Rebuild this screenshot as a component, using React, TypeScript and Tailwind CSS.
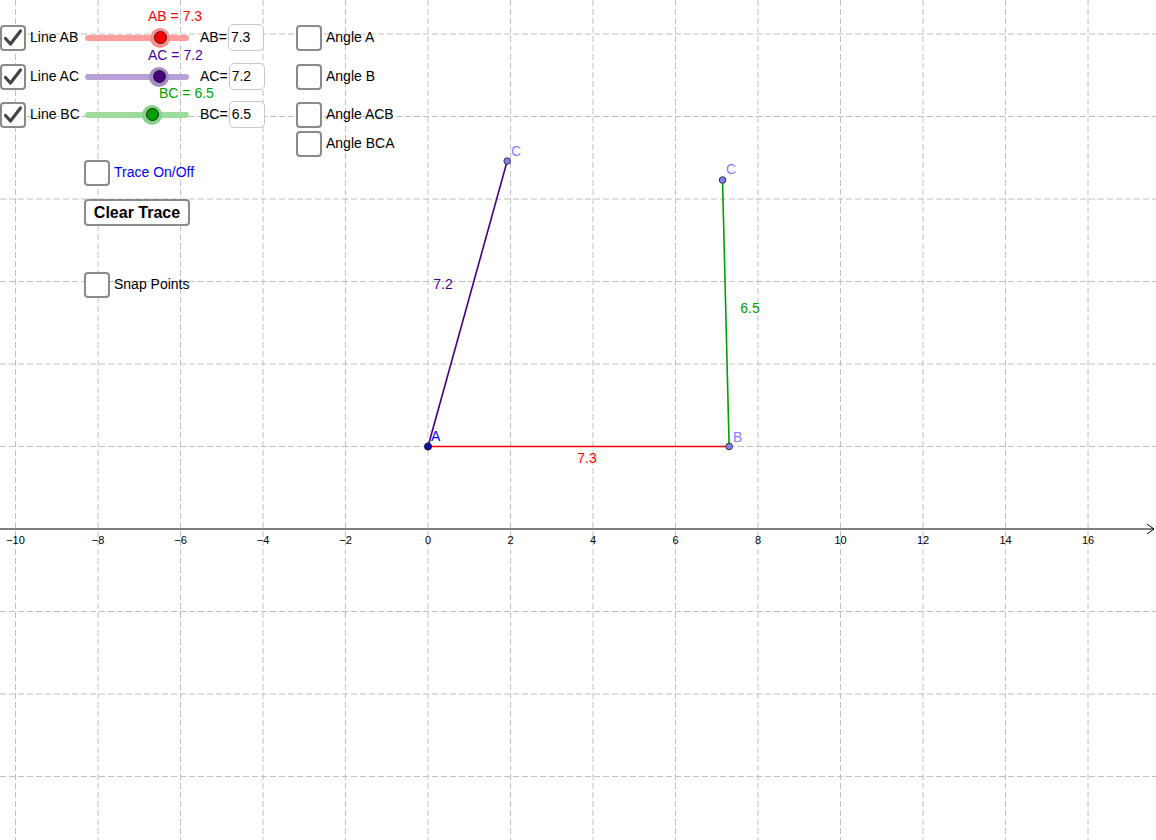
import React from "react";

const UNIT = 41.25;
const OX = 428;
const OY = 529;

const px = (x: number) => OX + x * UNIT;
const py = (y: number) => OY - y * UNIT;

type SliderRow = {
  id: string;
  label: string;
  value: number;
  knobX: number;
  y: number;
  caption: string;
  captionX: number;
  textColor: string;
  trackColor: string;
  knobColor: string;
  haloColor: string;
};

const sliderRows: SliderRow[] = [
  {
    id: "AB",
    label: "Line AB",
    value: 7.3,
    knobX: 75,
    y: 24,
    caption: "AB = 7.3",
    captionX: 148,
    textColor: "text-[#ff0000]",
    trackColor: "bg-[#ff9c9c]",
    knobColor: "bg-[#ff0000]",
    haloColor: "bg-[#ff8c8c]",
  },
  {
    id: "AC",
    label: "Line AC",
    value: 7.2,
    knobX: 74,
    y: 63,
    caption: "AC = 7.2",
    captionX: 148,
    textColor: "text-[#4c0099]",
    trackColor: "bg-[#b8a0d6]",
    knobColor: "bg-[#44007f]",
    haloColor: "bg-[#a58cc8]",
  },
  {
    id: "BC",
    label: "Line BC",
    value: 6.5,
    knobX: 67,
    y: 101,
    caption: "BC = 6.5",
    captionX: 159,
    textColor: "text-[#00a000]",
    trackColor: "bg-[#9ddb9d]",
    knobColor: "bg-[#00a000]",
    haloColor: "bg-[#86d286]",
  },
];

function CheckBox({ checked }: { checked?: boolean }) {
  return (
    <div className="w-[26px] h-[26px] shrink-0 rounded-[4px] border-2 border-[#8a8a8a] bg-white flex items-center justify-center">
      {checked ? (
        <svg width="20" height="20" viewBox="0 0 20 20">
          <path
            d="M2.5 10.5 L7.5 16 L17.5 3"
            fill="none"
            stroke="#444"
            strokeWidth="3.2"
            strokeLinecap="round"
            strokeLinejoin="round"
          />
        </svg>
      ) : null}
    </div>
  );
}

function Slider({ row }: { row: SliderRow }) {
  return (
    <div className="relative w-[104px] h-[26px] shrink-0">
      <div className={`absolute left-0 right-0 top-[10px] h-[6px] rounded-full ${row.trackColor}`} />
      <div
        className={`absolute top-[3px] w-[20px] h-[20px] rounded-full ${row.haloColor} flex items-center justify-center`}
        style={{ left: row.knobX - 10 }}
      >
        <div className={`w-[13px] h-[13px] rounded-full border border-[#222] ${row.knobColor}`} />
      </div>
    </div>
  );
}

function Graph() {
  const vLines: number[] = [];
  for (let k = -5; k <= 9; k++) vLines.push(OX + k * 82.5);
  const hLines: number[] = [];
  for (let k = -6; k <= 4; k++) if (k !== 0) hLines.push(OY + k * 82.5);
  const ticks = [-10, -8, -6, -4, -2, 0, 2, 4, 6, 8, 10, 12, 14, 16];

  const A = { x: px(0), y: py(2) };
  const B = { x: px(7.3), y: py(2) };
  const C1 = { x: px(1.92), y: py(8.92) };
  const C2 = { x: px(7.14), y: py(8.46) };

  return (
    <svg
      className="absolute inset-0"
      width="1156"
      height="840"
      viewBox="0 0 1156 840"
      style={{ fontFamily: '"Liberation Sans", Arial, sans-serif' }}
    >
      {vLines.map((x) => (
        <line key={`v${x}`} x1={x} y1={0} x2={x} y2={840} stroke="#c0c0c0" strokeDasharray="6 3" />
      ))}
      {hLines.map((y) => (
        <line key={`h${y}`} x1={0} y1={y} x2={1156} y2={y} stroke="#c0c0c0" strokeDasharray="6 3" />
      ))}

      <line x1={0} y1={OY} x2={1154} y2={OY} stroke="#000" strokeWidth="1.2" />
      <polyline points="1147,524 1154,529 1147,534" fill="none" stroke="#000" strokeWidth="1" />
      {ticks.map((t) => (
        <text key={t} x={px(t)} y={544} fontSize="11" textAnchor="middle" fill="#000">
          {t < 0 ? `\u2212${-t}` : t}
        </text>
      ))}

      <line x1={A.x} y1={A.y} x2={B.x} y2={B.y} stroke="#ff0000" strokeWidth="1.6" />
      <line x1={A.x} y1={A.y} x2={C1.x} y2={C1.y} stroke="#44007f" strokeWidth="1.6" />
      <line x1={B.x} y1={B.y} x2={C2.x} y2={C2.y} stroke="#00a000" strokeWidth="1.6" />

      <text x={587} y={463} fontSize="14" textAnchor="middle" fill="#ff0000">7.3</text>
      <text x={443} y={289} fontSize="14" textAnchor="middle" fill="#4c0099">7.2</text>
      <text x={750} y={313} fontSize="14" textAnchor="middle" fill="#00a000">6.5</text>

      <circle cx={A.x} cy={A.y} r="3.5" fill="#0a0ac8" stroke="#111" strokeWidth="1" />
      <circle cx={B.x} cy={B.y} r="3.3" fill="#7f7fff" stroke="#333" strokeWidth="1" />
      <circle cx={C1.x} cy={C1.y} r="3.3" fill="#7f7fff" stroke="#333" strokeWidth="1" />
      <circle cx={C2.x} cy={C2.y} r="3.3" fill="#7f7fff" stroke="#333" strokeWidth="1" />

      <text x={431} y={441} fontSize="14" fill="#0000ff">A</text>
      <text x={733} y={442} fontSize="14" fill="#7f7fff">B</text>
      <text x={511} y={156} fontSize="14" fill="#7f7fff">C</text>
      <text x={726} y={174} fontSize="14" fill="#7f7fff">C</text>
    </svg>
  );
}

export default function App() {
  return (
    <div
      className="relative w-[1156px] h-[840px] bg-white overflow-hidden text-[14px] text-black"
      style={{ fontFamily: '"Liberation Sans", Arial, sans-serif' }}
    >
      <Graph />

      {/* length sliders */}
      {sliderRows.map((row) => (
        <React.Fragment key={row.id}>
          <div
            className={`absolute leading-none ${row.textColor}`}
            style={{ left: row.captionX, top: row.y - 15 }}
          >
            {row.caption}
          </div>
          <div className="absolute left-0 flex items-center" style={{ top: row.y }}>
            <CheckBox checked />
            <span className="ml-[4px] w-[55px]">{row.label}</span>
            <Slider row={row} />
            <span className="ml-[11px]">{row.id}=</span>
            <div className="ml-[1px] w-[36px] h-[27px] rounded-[5px] border border-[#c8c8c8] bg-white flex items-center pl-[2px]">
              {row.value}
            </div>
          </div>
        </React.Fragment>
      ))}

      {/* angle toggles */}
      <div className="absolute left-[296px] top-[24px] flex flex-col">
        <div className="flex items-center gap-[4px] h-[27px]">
          <CheckBox />
          <span>Angle A</span>
        </div>
        <div className="flex items-center gap-[4px] h-[27px] mt-[12px]">
          <CheckBox />
          <span>Angle B</span>
        </div>
        <div className="flex items-center gap-[4px] h-[27px] mt-[11px]">
          <CheckBox />
          <span>Angle ACB</span>
        </div>
        <div className="flex items-center gap-[4px] h-[27px] mt-[2px]">
          <CheckBox />
          <span>Angle BCA</span>
        </div>
      </div>

      {/* trace controls */}
      <div className="absolute left-[84px] top-[159px] flex flex-col items-start">
        <div className="flex items-center gap-[4px] h-[27px]">
          <CheckBox />
          <span className="text-[#0000ff]">Trace On/Off</span>
        </div>
        <button
          type="button"
          className="mt-[13px] w-[106px] h-[27px] rounded-[4px] border-2 border-[#8a8a8a] bg-white font-bold text-[16px] leading-none"
        >
          Clear Trace
        </button>
        <div className="flex items-center gap-[4px] h-[27px] mt-[45px]">
          <CheckBox />
          <span>Snap Points</span>
        </div>
      </div>
    </div>
  );
}
